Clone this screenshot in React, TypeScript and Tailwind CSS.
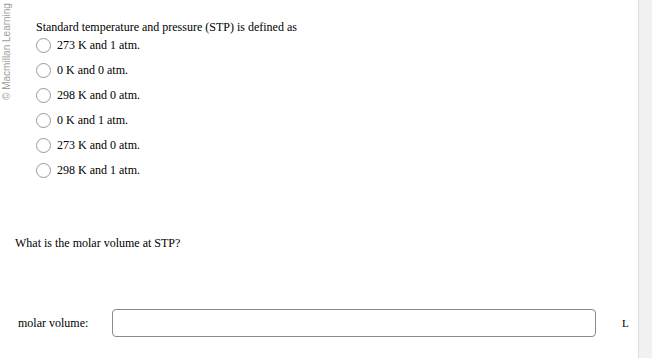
import React from 'react'

const options = [
  '273 K and 1 atm.',
  '0 K and 0 atm.',
  '298 K and 0 atm.',
  '0 K and 1 atm.',
  '273 K and 0 atm.',
  '298 K and 1 atm.',
]

function App() {
  return (
    <div className="flex h-[358px] w-[652px] overflow-hidden bg-white text-black font-['Liberation_Serif',serif]">
      <div className="relative flex-1">
        {/* credit line */}
        <div className="absolute left-0 top-0 flex h-[102px] w-[12px] items-center justify-center">
          <span className="block -rotate-90 whitespace-nowrap font-['Liberation_Sans',sans-serif] text-[10px] text-[#a0a0a0]">
            © Macmillan Learning
          </span>
        </div>

        <div className="pl-[36px] pt-[20px]">
          <p className="text-[12px] leading-[15px]">
            Standard temperature and pressure (STP) is defined as
          </p>
          <div className="mt-[3px] flex flex-col gap-[11px]">
            {options.map((o) => (
              <label key={o} className="flex h-[14px] items-center gap-[6px] text-[12px]">
                <span className="h-[15px] w-[15px] rounded-full border border-[#999] bg-white" />
                {o}
              </label>
            ))}
          </div>
        </div>

        <p className="pl-[15px] pt-[57px] text-[12px]">What is the molar volume at STP?</p>

        <div className="mt-[57px] flex items-center">
          <span className="w-[112px] pl-[18px] text-[12px]">molar volume:</span>
          <div className="h-[28px] w-[484px] rounded-[4px] border border-[#8a8a8a] bg-white" />
          <span className="pl-[26px] text-[11px]">L</span>
        </div>
      </div>
      <div className="w-[14px] border-l border-[#dcdcdc] bg-[#f1f1f1]" />
    </div>
  )
}

export default App
